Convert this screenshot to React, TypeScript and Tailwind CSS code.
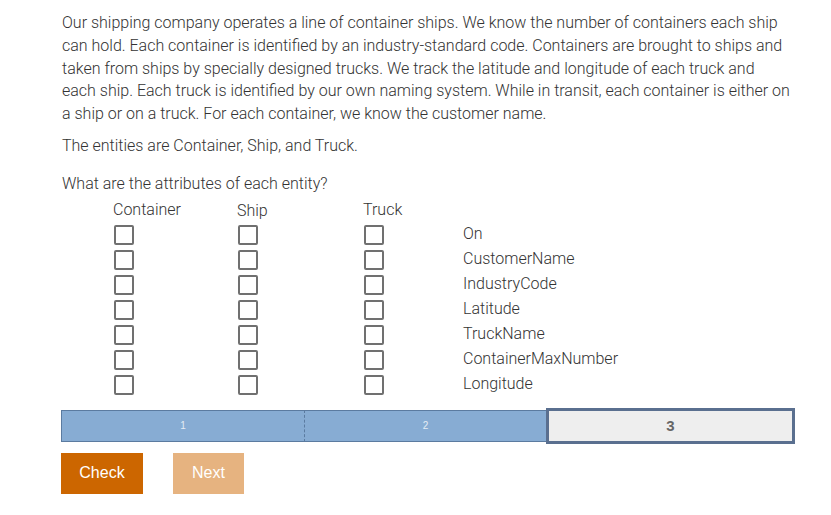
import React from 'react';

const attributes = [
  'On',
  'CustomerName',
  'IndustryCode',
  'Latitude',
  'TruckName',
  'ContainerMaxNumber',
  'Longitude',
];

const Box: React.FC = () => (
  <div className="w-[20px] h-[20px] border-[2.5px] border-[#707070] rounded-[2px] bg-white" />
);

const App: React.FC = () => {
  return (
    <div className="bg-white min-h-[515px] pt-[12px] text-[#333] font-['Roboto',sans-serif] font-light text-[16px] leading-[22.75px]">
      <div className="ml-[62px] w-[730px]">
        <p className="mb-[9px]">
          Our shipping company operates a line of container ships. We know the number of containers each ship can
          hold. Each container is identified by an industry-standard code. Containers are brought to ships and taken
          from ships by specially designed trucks. We track the latitude and longitude of each truck and each ship.
          Each truck is identified by our own naming system. While in transit, each container is either on a ship or
          on a truck. For each container, we know the customer name.
        </p>
        <p className="mb-[15px]">The entities are Container, Ship, and Truck.</p>
        <p className="mb-[4px]">What are the attributes of each entity?</p>
      </div>

      <div className="ml-[62px] grid grid-cols-[51px_124px_126px_100px_auto]">
        <div />
        <div className="h-[23px]">Container</div>
        <div className="h-[23px] pt-[1px]">Ship</div>
        <div className="h-[23px]">Truck</div>
        <div />
        {attributes.map((a) => (
          <React.Fragment key={a}>
            <div />
            <div className="h-[25px] flex items-center pl-[1px]">
              <Box />
            </div>
            <div className="h-[25px] flex items-center pl-[1px]">
              <Box />
            </div>
            <div className="h-[25px] flex items-center pl-[1px]">
              <Box />
            </div>
            <div className="h-[25px] flex items-center">{a}</div>
          </React.Fragment>
        ))}
      </div>

      <div className="ml-[61px] mt-[11px] flex items-center w-[734px] font-['Liberation_Sans',Arial,sans-serif]">
        <div className="w-[243px] h-[32px] bg-[#87acd3] border border-[#5b7ba0] border-r-0 flex items-center justify-center text-[10px] font-normal text-[#e4ecf5]">
          1
        </div>
        <div className="w-[242px] h-[32px] bg-[#87acd3] border border-[#5b7ba0] border-r-0 [border-left-style:dashed] flex items-center justify-center text-[10px] font-normal text-[#e4ecf5]">
          2
        </div>
        <div className="w-[249px] h-[36px] bg-[#eeeeee] border-[3px] border-[#5a6f8f] flex items-center justify-center text-[15px] font-bold text-[#666]">
          3
        </div>
      </div>

      <div className="ml-[61px] mt-[9px] flex gap-[30px] font-['Liberation_Sans',Arial,sans-serif] font-normal">
        <button className="w-[82px] h-[41px] bg-[#cc6600] text-white text-[16px]">Check</button>
        <button className="w-[71px] h-[41px] bg-[#e6b380] text-white text-[16px]">Next</button>
      </div>
    </div>
  );
};

export default App;
